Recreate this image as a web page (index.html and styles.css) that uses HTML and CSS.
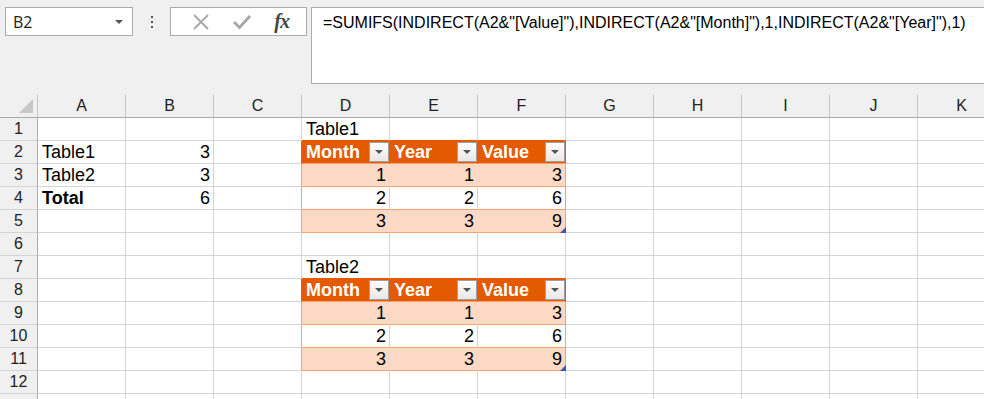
FILE: index.html
```html
<!DOCTYPE html>
<html lang="en">
<head>
    <meta charset="UTF-8">
    <meta name="viewport" content="width=device-width, initial-scale=1.0">
    <title>Book1 - Excel</title>
    <link rel="stylesheet" href="styles.css">
</head>
<body>
    <div class="topbar">
        <div class="namebox">
            <span>B2</span>
            <svg class="namebox-arrow" width="8" height="4" viewBox="0 0 8 4"><path d="M0 0H8L4 4Z" fill="#555"/></svg>
        </div>
        <div class="dots"><i></i><i></i><i></i></div>
        <div class="fx-buttons">
            <svg width="18" height="18" viewBox="0 0 18 18"><path d="M2 2L16 16M16 2L2 16" stroke="#a6a6a6" stroke-width="1.8" fill="none"/></svg>
            <svg width="20" height="18" viewBox="0 0 20 18"><path d="M2 9L7.5 14.5L18 3" stroke="#a6a6a6" stroke-width="2.8" fill="none"/></svg>
            <span class="fx">fx</span>
        </div>
        <div class="formula">=SUMIFS(INDIRECT(A2&amp;"[Value]"),INDIRECT(A2&amp;"[Month]"),1,INDIRECT(A2&amp;"[Year]"),1)</div>
    </div>

    <div class="sheet">
        <div class="row">
            <div class="corner"><span class="select-all"></span></div>
            <div class="ch">A</div><div class="ch">B</div><div class="ch">C</div><div class="ch">D</div>
            <div class="ch">E</div><div class="ch">F</div><div class="ch">G</div><div class="ch">H</div>
            <div class="ch">I</div><div class="ch">J</div><div class="ch">K</div>
        </div>
        <div class="row">
            <div class="rh">1</div>
            <div class="c"></div><div class="c"></div><div class="c"></div>
            <div class="c top">Table1</div><div class="c top"></div><div class="c top"></div>
            <div class="c"></div><div class="c"></div><div class="c"></div><div class="c"></div><div class="c"></div>
        </div>
        <div class="row">
            <div class="rh">2</div>
            <div class="c">Table1</div><div class="c num">3</div><div class="c left-head"></div>
            <div class="c th">Month<span class="filter"></span></div>
            <div class="c th">Year<span class="filter"></span></div>
            <div class="c th last">Value<span class="filter"></span></div>
            <div class="c"></div><div class="c"></div><div class="c"></div><div class="c"></div><div class="c"></div>
        </div>
        <div class="row">
            <div class="rh">3</div>
            <div class="c">Table2</div><div class="c num">3</div><div class="c left"></div>
            <div class="c num band">1</div><div class="c num band">1</div><div class="c num band last">3</div>
            <div class="c"></div><div class="c"></div><div class="c"></div><div class="c"></div><div class="c"></div>
        </div>
        <div class="row">
            <div class="rh">4</div>
            <div class="c bold">Total</div><div class="c num">6</div><div class="c left"></div>
            <div class="c num plain">2</div><div class="c num plain">2</div><div class="c num plain last">6</div>
            <div class="c"></div><div class="c"></div><div class="c"></div><div class="c"></div><div class="c"></div>
        </div>
        <div class="row">
            <div class="rh">5</div>
            <div class="c"></div><div class="c"></div><div class="c left"></div>
            <div class="c num band">3</div><div class="c num band">3</div><div class="c num band last">9<span class="resize"></span></div>
            <div class="c"></div><div class="c"></div><div class="c"></div><div class="c"></div><div class="c"></div>
        </div>
        <div class="row">
            <div class="rh">6</div>
            <div class="c"></div><div class="c"></div><div class="c"></div><div class="c"></div><div class="c"></div><div class="c"></div>
            <div class="c"></div><div class="c"></div><div class="c"></div><div class="c"></div><div class="c"></div>
        </div>
        <div class="row">
            <div class="rh">7</div>
            <div class="c"></div><div class="c"></div><div class="c"></div>
            <div class="c top">Table2</div><div class="c top"></div><div class="c top"></div>
            <div class="c"></div><div class="c"></div><div class="c"></div><div class="c"></div><div class="c"></div>
        </div>
        <div class="row">
            <div class="rh">8</div>
            <div class="c"></div><div class="c"></div><div class="c left-head"></div>
            <div class="c th">Month<span class="filter"></span></div>
            <div class="c th">Year<span class="filter"></span></div>
            <div class="c th last">Value<span class="filter"></span></div>
            <div class="c"></div><div class="c"></div><div class="c"></div><div class="c"></div><div class="c"></div>
        </div>
        <div class="row">
            <div class="rh">9</div>
            <div class="c"></div><div class="c"></div><div class="c left"></div>
            <div class="c num band">1</div><div class="c num band">1</div><div class="c num band last">3</div>
            <div class="c"></div><div class="c"></div><div class="c"></div><div class="c"></div><div class="c"></div>
        </div>
        <div class="row">
            <div class="rh">10</div>
            <div class="c"></div><div class="c"></div><div class="c left"></div>
            <div class="c num plain">2</div><div class="c num plain">2</div><div class="c num plain last">6</div>
            <div class="c"></div><div class="c"></div><div class="c"></div><div class="c"></div><div class="c"></div>
        </div>
        <div class="row">
            <div class="rh">11</div>
            <div class="c"></div><div class="c"></div><div class="c left"></div>
            <div class="c num band">3</div><div class="c num band">3</div><div class="c num band last">9<span class="resize"></span></div>
            <div class="c"></div><div class="c"></div><div class="c"></div><div class="c"></div><div class="c"></div>
        </div>
        <div class="row">
            <div class="rh">12</div>
            <div class="c"></div><div class="c"></div><div class="c"></div><div class="c"></div><div class="c"></div><div class="c"></div>
            <div class="c"></div><div class="c"></div><div class="c"></div><div class="c"></div><div class="c"></div>
        </div>
        <div class="row">
            <div class="rh"></div>
            <div class="c"></div><div class="c"></div><div class="c"></div><div class="c"></div><div class="c"></div><div class="c"></div>
            <div class="c"></div><div class="c"></div><div class="c"></div><div class="c"></div><div class="c"></div>
        </div>
    </div>
</body>
</html>
```

FILE: styles.css
```css
body {
    margin: 0;
    background-color: #f0f0f0;
    font-family: "Liberation Sans", Arial, sans-serif;
    color: #000;
    overflow: hidden;
}

/* formula bar */
.topbar {
    display: flex;
    align-items: flex-start;
    height: 95px;
    padding: 7px 0 0 5px;
    box-sizing: border-box;
}

.namebox {
    width: 128px;
    height: 29px;
    box-sizing: border-box;
    border: 1px solid #ababab;
    background-color: #fff;
    display: flex;
    align-items: center;
    justify-content: space-between;
    padding: 0 9px 0 7px;
    font-family: "Open Sans", sans-serif;
    font-size: 16px;
    color: #222;
}

.namebox-arrow {
    margin-top: 1px;
}

.dots {
    width: 37px;
    height: 29px;
    display: flex;
    flex-direction: column;
    align-items: center;
    justify-content: center;
    gap: 3px;
}

.dots i {
    display: block;
    width: 2px;
    height: 2px;
    background-color: #555;
}

.fx-buttons {
    width: 137px;
    height: 29px;
    box-sizing: border-box;
    border: 1px solid #ababab;
    background-color: #fff;
    display: flex;
    align-items: center;
    justify-content: space-around;
    padding: 0 6px 0 10px;
}

.fx {
    font-family: "Liberation Serif", serif;
    font-style: italic;
    font-weight: bold;
    font-size: 20px;
    color: #444;
    letter-spacing: -1px;
}

.formula {
    flex: 1;
    height: 77px;
    margin-left: 4px;
    margin-right: -2px;
    box-sizing: border-box;
    border: 1px solid #ababab;
    background-color: #fff;
    padding: 4px 11px;
    font-size: 16px;
    line-height: 22px;
    white-space: nowrap;
}

/* grid */
.sheet {
    background-color: #fff;
    width: 1006px;
}

.row {
    display: grid;
    grid-template-columns: 38px repeat(11, 88px);
    height: 23px;
}

.corner, .ch, .rh, .c {
    box-sizing: border-box;
    height: 23px;
}

.row:first-child {
    background-color: #f0f0f0;
}

.corner {
    border-right: 1px solid #c6c6c6;
    border-bottom: 1px solid #ababab;
    position: relative;
}

.select-all {
    position: absolute;
    right: 4px;
    bottom: 4px;
    width: 0;
    height: 0;
    border-left: 14px solid transparent;
    border-bottom: 14px solid #c8c8c8;
}

.ch {
    border-right: 1px solid #c6c6c6;
    border-bottom: 1px solid #ababab;
    text-align: center;
    font-size: 16px;
    line-height: 22px;
    color: #222;
}

.rh {
    background-color: #f0f0f0;
    border-right: 1px solid #ababab;
    border-bottom: 1px solid #d4d4d4;
    text-align: center;
    font-size: 16px;
    line-height: 22px;
    color: #222;
}

.c {
    border-right: 1px solid #d4d4d4;
    border-bottom: 1px solid #d4d4d4;
    padding: 0 4px;
    font-size: 18px;
    line-height: 22px;
    white-space: nowrap;
    position: relative;
}

.num {
    text-align: right;
    padding-right: 3px;
}

.bold {
    font-weight: bold;
}

/* excel table (orange, medium style) */
.top {
    border-bottom-color: #e35a00;
}

.left-head {
    border-right-color: #e35a00;
}

.left {
    border-right-color: #f7a26e;
}

.th {
    background-color: #e35a00;
    border-right-color: #e35a00;
    border-bottom-color: #f7a26e;
    color: #fff;
    font-weight: bold;
    display: flex;
    align-items: center;
    justify-content: space-between;
    padding: 0 0 0 4px;
}

.band {
    background-color: #fcd9c4;
    border-right-color: #fcd9c4;
    border-bottom-color: #f7a26e;
}

.plain {
    border-bottom-color: #f7a26e;
}

.c.last {
    border-right-color: #f7a26e;
}

.th.last {
    border-right-color: #e35a00;
}

.filter {
    width: 20px;
    height: 20px;
    box-sizing: border-box;
    border: 1px solid #a0a0a0;
    background: linear-gradient(#fdfdfd, #e8e8e8);
    position: relative;
}

.filter::after {
    content: "";
    position: absolute;
    left: 5px;
    top: 7px;
    border-left: 4px solid transparent;
    border-right: 4px solid transparent;
    border-top: 4px solid #555;
}

.resize {
    position: absolute;
    right: -1px;
    bottom: -1px;
    width: 0;
    height: 0;
    border-left: 6px solid transparent;
    border-bottom: 6px solid #3b55b8;
}
```
